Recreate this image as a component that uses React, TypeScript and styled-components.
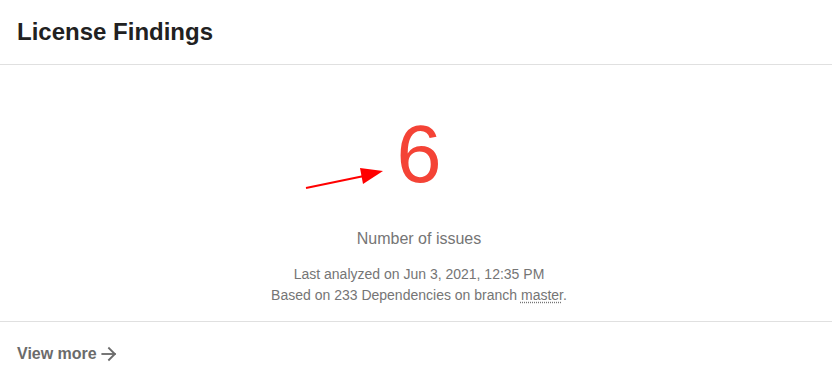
import React from 'react'
import styled, { createGlobalStyle } from 'styled-components'

const GlobalStyle = createGlobalStyle`
  html, body {
    margin: 0;
    padding: 0;
    background: #fff;
    font-family: "Liberation Sans", Arial, sans-serif;
  }
`

const Card = styled.div`
  width: 832px;
  height: 379px;
  display: flex;
  flex-direction: column;
  background: #fff;
`

const Header = styled.div`
  height: 65px;
  display: flex;
  align-items: center;
  padding: 0 17px;
  border-bottom: 1px solid #e0e0e0;
  box-sizing: border-box;
`

const Title = styled.h2`
  margin: 0;
  font-size: 24px;
  font-weight: bold;
  color: #212121;
`

const Body = styled.div`
  position: relative;
  height: 257px;
  display: flex;
  flex-direction: column;
  align-items: center;
  padding-left: 6px;
  border-bottom: 1px solid #e0e0e0;
  box-sizing: border-box;
`

const Count = styled.div`
  margin-top: 43px;
  font-size: 81px;
  line-height: 92px;
  color: #f44336;
`

const Label = styled.div`
  margin-top: 29px;
  font-size: 16px;
  line-height: 20px;
  color: #757575;
`

const Meta = styled.div`
  margin-top: 15px;
  font-size: 14px;
  line-height: 21px;
  color: #757575;
  text-align: center;
`

const Branch = styled.span`
  text-decoration: underline dotted;
  text-underline-offset: 2px;
`

const Annotation = styled.svg`
  position: absolute;
  left: 300px;
  top: 35px;
  overflow: visible;
`

const Footer = styled.div`
  flex: 1;
  display: flex;
  align-items: center;
  padding: 6px 17px 0;
`

const MoreLink = styled.a`
  display: flex;
  align-items: center;
  gap: 2px;
  font-size: 16px;
  font-weight: bold;
  color: #6b6b6b;
  text-decoration: none;
`

const App: React.FC = () => {
  return (
    <>
      <GlobalStyle />
      <Card>
        <Header>
          <Title>License Findings</Title>
        </Header>
        <Body>
          <Count>6</Count>
          <Label>Number of issues</Label>
          <Meta>
            Last analyzed on Jun 3, 2021, 12:35 PM
            <br />
            Based on 233 Dependencies on branch <Branch>master</Branch>.
          </Meta>
          <Annotation width="90" height="100" viewBox="0 0 90 100">
            <line x1="6" y1="88" x2="64" y2="76" stroke="#ff0000" strokeWidth="2" />
            <polygon points="83,71 60,68 63,84" fill="#ff0000" />
          </Annotation>
        </Body>
        <Footer>
          <MoreLink href="#">
            View more
            <svg width="20" height="20" viewBox="0 0 24 24" fill="none" stroke="#6b6b6b" strokeWidth="2.2" strokeLinecap="square">
              <path d="M4 12h15" />
              <path d="M12 5l7 7-7 7" />
            </svg>
          </MoreLink>
        </Footer>
      </Card>
    </>
  )
}

export default App
